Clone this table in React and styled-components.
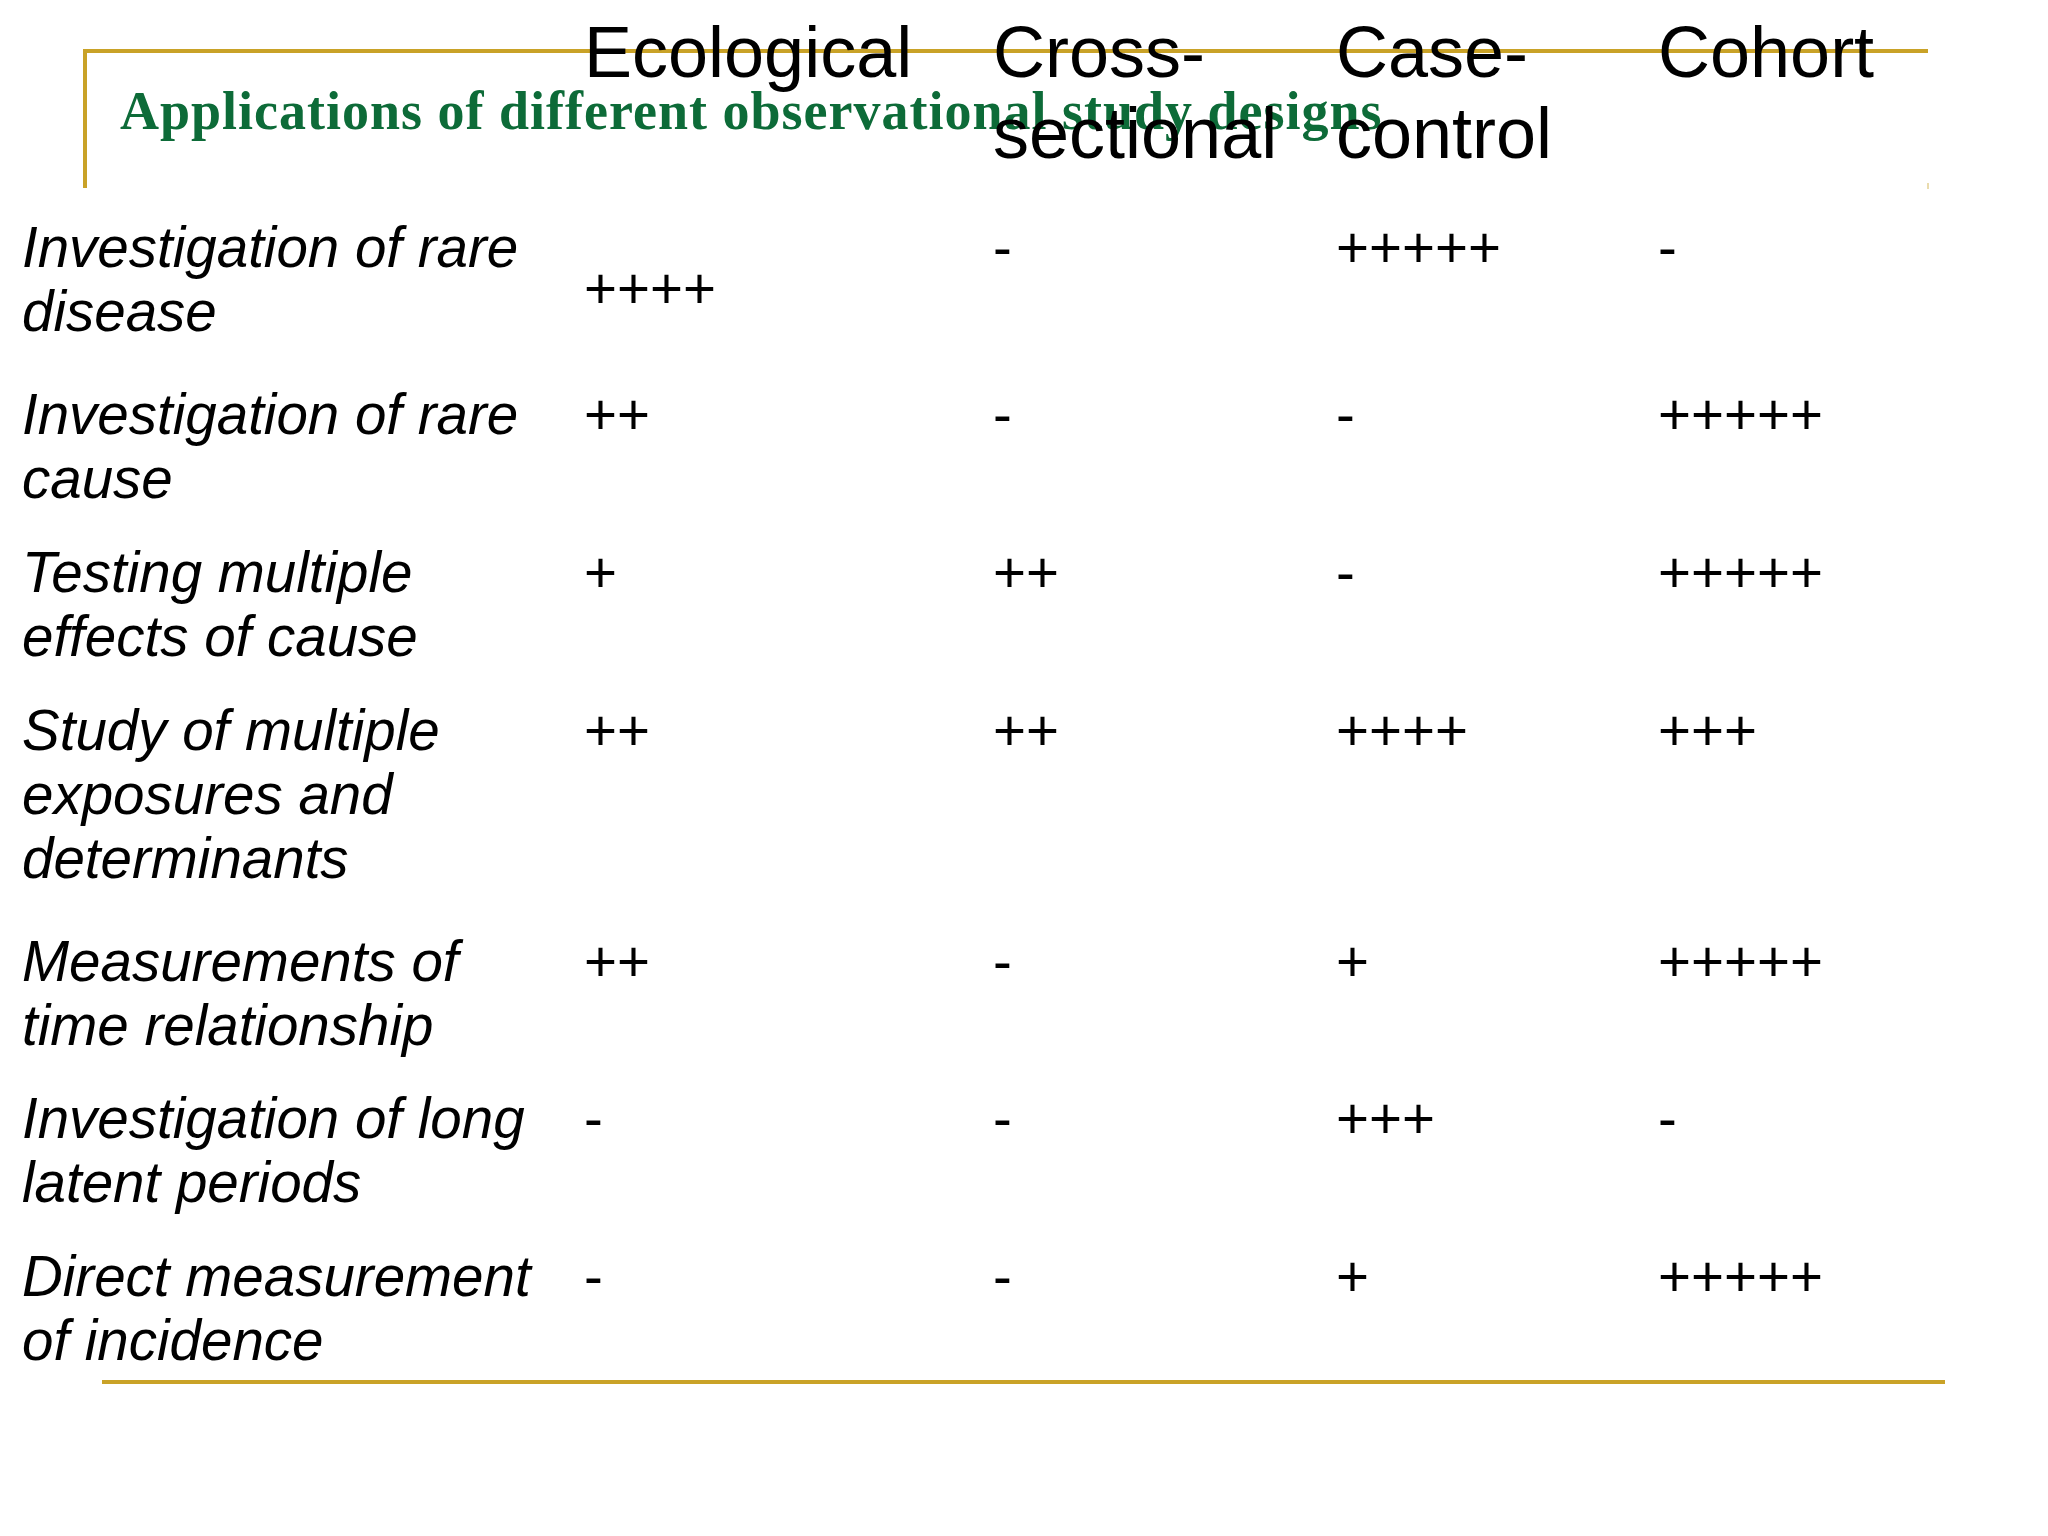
import React from "react";
import styled, { createGlobalStyle } from "styled-components";

const GlobalStyle = createGlobalStyle`
  html, body {
    margin: 0;
    padding: 0;
    background: #ffffff;
  }
  body {
    font-family: "Liberation Sans", Arial, sans-serif;
    color: #000;
  }
`;

const GOLD = "#c9a227";
const GREEN = "#0d6b38";

const Slide = styled.div`
  position: relative;
  width: 2048px;
  height: 1536px;
  background: #fff;
  overflow: hidden;
`;

// gold frame + title sit underneath the table header, which overlaps them
const TitleFrame = styled.div`
  position: absolute;
  left: 83px;
  top: 49px;
  width: 1845px;
  height: 139px;
  box-sizing: border-box;
  border-top: 4px solid ${GOLD};
  border-left: 4px solid ${GOLD};
  padding: 31px 0 0 33px;

  &::after {
    content: "";
    position: absolute;
    right: -1px;
    bottom: -1px;
    width: 2px;
    height: 6px;
    background: #eadcae;
  }
`;

const Title = styled.h1`
  margin: 0;
  font-family: "Liberation Serif", "Times New Roman", serif;
  font-weight: bold;
  font-size: 54px;
  line-height: 1;
  letter-spacing: 1px;
  color: ${GREEN};
  white-space: nowrap;
`;

const Table = styled.div`
  position: relative;
  padding: 12px 0 0 22px;
`;

const columns = "562px 409px 343px 322px 1fr";

const HeaderRow = styled.div`
  display: grid;
  grid-template-columns: ${columns};
  margin-bottom: 42px;
`;

const HeaderCell = styled.div`
  font-size: 72px;
  line-height: 81px;
  white-space: nowrap;
`;

const Row = styled.div`
  display: grid;
  grid-template-columns: ${columns};
  align-items: start;
  padding-bottom: ${(p) => p.$gap}px;
`;

const Label = styled.div`
  font-style: italic;
  font-size: 56.5px;
  line-height: 64px;
  white-space: nowrap;
`;

const Value = styled.div`
  font-size: 56.5px;
  line-height: 64px;
  white-space: nowrap;
  margin-top: ${(p) => (p.$middle ? 41 : 0)}px;
`;

const BottomRule = styled.div`
  margin: 7px 0 0 80px;
  width: 1843px;
  height: 4px;
  background: ${GOLD};
`;

const headers = [
  ["Ecological"],
  ["Cross-", "sectional"],
  ["Case-", "control"],
  ["Cohort"],
];

const rows = [
  {
    label: ["Investigation of rare", "disease"],
    values: ["++++", "-", "+++++", "-"],
    middle: true,
    gap: 39,
  },
  {
    label: ["Investigation of rare", "cause"],
    values: ["++", "-", "-", "+++++"],
    gap: 30,
  },
  {
    label: ["Testing multiple", "effects of cause"],
    values: ["+", "++", "-", "+++++"],
    gap: 30,
  },
  {
    label: ["Study of multiple", "exposures and", "determinants"],
    values: ["++", "++", "++++", "+++"],
    gap: 39,
  },
  {
    label: ["Measurements of", "time relationship"],
    values: ["++", "-", "+", "+++++"],
    gap: 29,
  },
  {
    label: ["Investigation of long", "latent periods"],
    values: ["-", "-", "+++", "-"],
    gap: 30,
  },
  {
    label: ["Direct measurement", "of incidence"],
    values: ["-", "-", "+", "+++++"],
    gap: 0,
  },
];

const Lines = ({ lines }) =>
  lines.map((line, i) => (
    <React.Fragment key={i}>
      {i > 0 && <br />}
      {line}
    </React.Fragment>
  ));

export default function App() {
  return (
    <Slide>
      <GlobalStyle />
      <TitleFrame>
        <Title>Applications of different observational study designs</Title>
      </TitleFrame>
      <Table>
        <HeaderRow>
          <div />
          {headers.map((h, i) => (
            <HeaderCell key={i}>
              <Lines lines={h} />
            </HeaderCell>
          ))}
        </HeaderRow>
        {rows.map((row, r) => (
          <Row key={r} $gap={row.gap}>
            <Label>
              <Lines lines={row.label} />
            </Label>
            {row.values.map((v, c) => (
              <Value key={c} $middle={row.middle && c === 0}>
                {v}
              </Value>
            ))}
          </Row>
        ))}
        <BottomRule />
      </Table>
    </Slide>
  );
}
